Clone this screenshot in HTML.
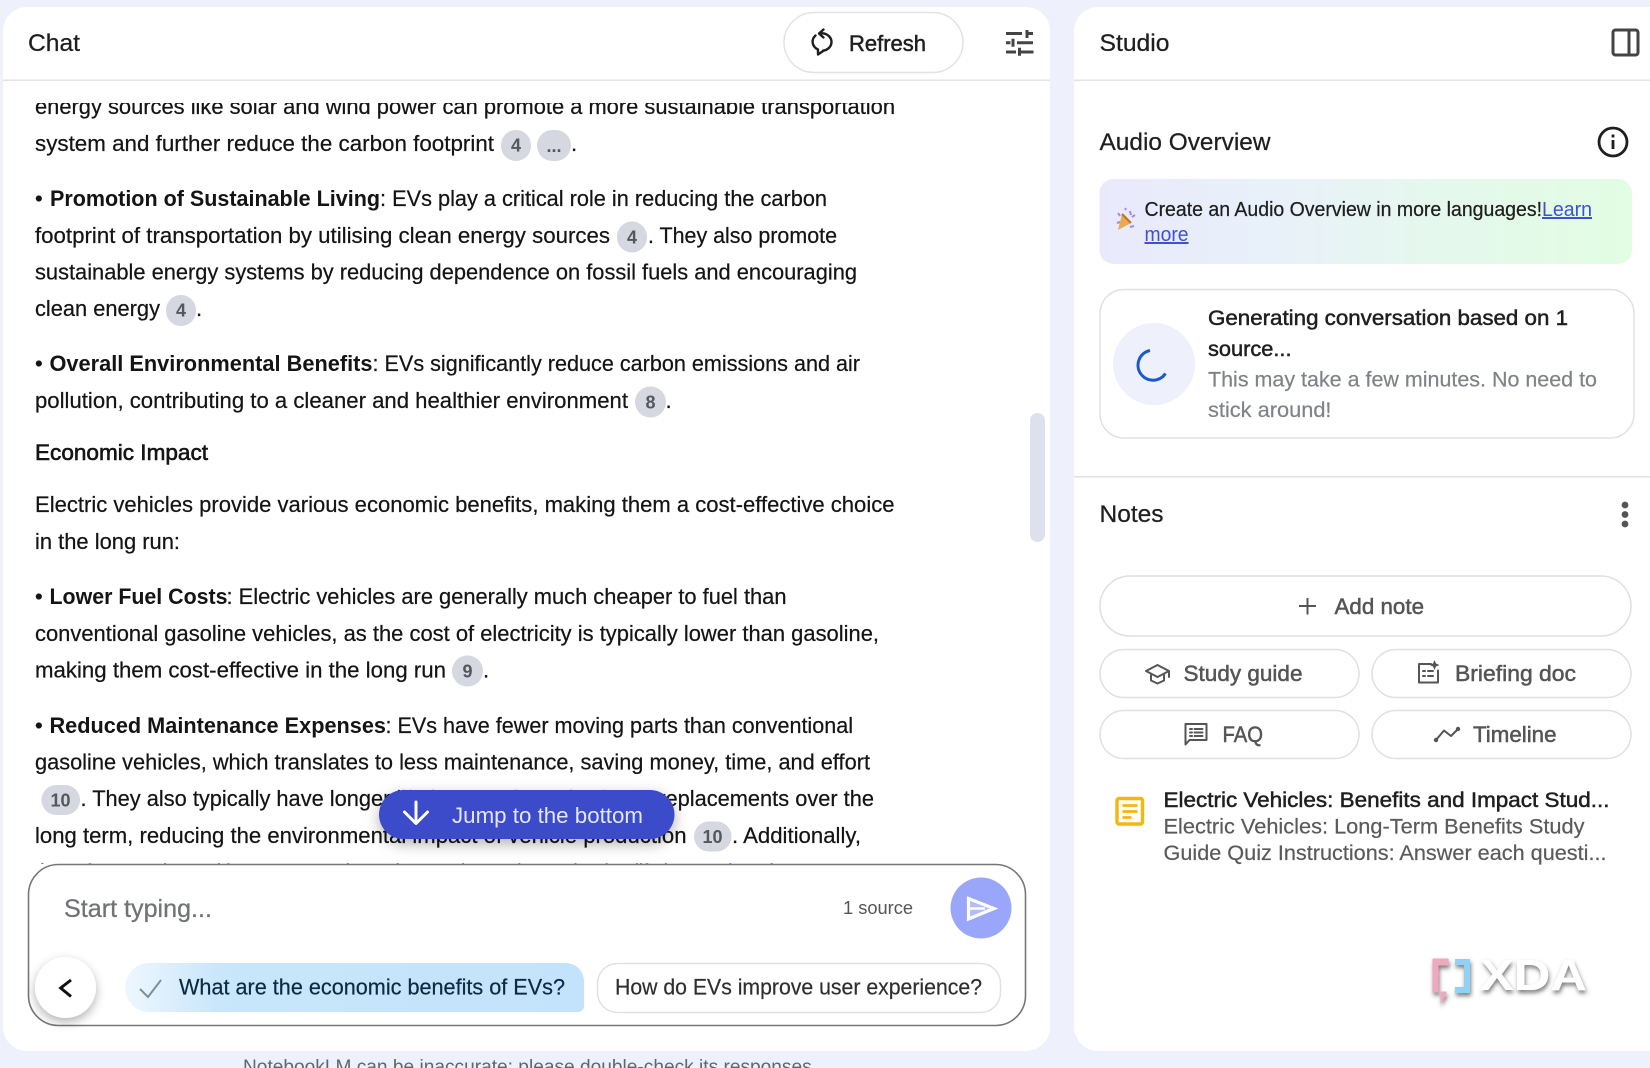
<!DOCTYPE html>
<html><head><meta charset="utf-8"><title>NotebookLM Chat</title>
<style>
html,body{margin:0;padding:0;background:#eef0fc;width:1650px;height:1068px;overflow:hidden}
svg{display:block}
text{font-family:"Liberation Sans",sans-serif;fill:#1f1f1f;font-size:22px}
g.t text{fill:#141414;stroke:#141414;stroke-width:.22px}
g.t text.b{stroke:none}
g.t text.c{fill:#55565e;stroke:none}
g.t text.m{stroke-width:.6px}
.b{font-weight:bold}
.m{stroke:#1f1f1f;stroke-width:.5px}
.l{stroke:#1f1f1f;stroke-width:.25px}
.c{font-size:18px;fill:#55565e;font-weight:bold;text-anchor:middle}
.gm{fill:#555;stroke:#555;stroke-width:.5px}
.gs{fill:#5a5a5a;stroke:#5a5a5a;stroke-width:.2px}
.chip{fill:#d5d7e1}
.ln{fill:none;stroke:#555;stroke-width:2;stroke-linecap:round;stroke-linejoin:round}
</style></head><body>
<svg width="1650" height="1068" viewBox="0 0 1650 1068" xmlns="http://www.w3.org/2000/svg">
<defs>
<clipPath id="cc"><rect x="3" y="103" width="1047" height="761"/></clipPath>
<linearGradient id="bn" x1="0" y1="0" x2="1" y2="0"><stop offset="0" stop-color="#e9e9fb"/><stop offset=".35" stop-color="#e8f1f9"/><stop offset=".65" stop-color="#e5f8ec"/><stop offset="1" stop-color="#e2fde3"/></linearGradient>
<linearGradient id="ch" x1="0" y1="0" x2="1" y2="0"><stop offset="0" stop-color="#eef7fe"/><stop offset=".2" stop-color="#c9e6fb"/><stop offset="1" stop-color="#c2e3fb"/></linearGradient>
<filter id="sh" x="-30%" y="-30%" width="160%" height="170%"><feDropShadow dx="0" dy="4" stdDeviation="5" flood-color="#000" flood-opacity=".3"/></filter>
<filter id="sh2" x="-20%" y="-50%" width="140%" height="220%"><feDropShadow dx="0" dy="5" stdDeviation="7" flood-color="#000" flood-opacity=".3"/></filter>
<filter id="lg" x="-20%" y="-30%" width="140%" height="170%"><feDropShadow dx="1" dy="3" stdDeviation="2" flood-color="#444" flood-opacity=".7"/></filter>
</defs>

<!-- panels -->
<rect x="3" y="7" width="1047" height="1044" rx="24" fill="#fff"/>
<rect x="1074" y="7" width="600" height="1044" rx="24" fill="#fff"/>

<!-- chat header -->
<text x="28" y="51" class="l" style="font-size:24px" textLength="52" lengthAdjust="spacingAndGlyphs">Chat</text>
<rect x="784" y="12.5" width="179" height="60" rx="30" fill="#fff" stroke="#e2e3e6" stroke-width="1.5"/>
<g fill="none" stroke="#1f1f1f" stroke-width="2.4" stroke-linejoin="round" stroke-linecap="round">
<path d="M820 33.3 H823 A10 8.8 0 0 1 823 50.7"/>
<path d="M823.5 29.5 L819 33.5 L823.5 37.5"/>
<path d="M815.5 35.5 A10 8.8 0 0 0 818 49.5 V54.5 L823.5 50.8"/>
</g>
<text x="849" y="51" class="m" textLength="77" lengthAdjust="spacingAndGlyphs">Refresh</text>
<g stroke="#444" stroke-width="3" fill="none">
<path d="M1006 33.5h16M1027 30v8M1027 33.5h6"/>
<path d="M1006 42.8h4.5M1013 38.8v8M1017 42.8h16"/>
<path d="M1006 52h10M1019.5 47.8v8M1019.5 52h14"/>
</g>
<rect x="3" y="79.5" width="1047" height="1.6" fill="#e3e3e6"/>

<!-- chat body -->
<g clip-path="url(#cc)" class="t">
<text x="35" y="114" textLength="860" lengthAdjust="spacingAndGlyphs">energy sources like solar and wind power can promote a more sustainable transportation</text>
<text x="35" y="151" textLength="459" lengthAdjust="spacingAndGlyphs">system and further reduce the carbon footprint</text>
<rect class="chip" x="501" y="130" width="30" height="31" rx="15"/><text class="c" x="516" y="151.5">4</text>
<rect class="chip" x="537" y="130" width="34" height="31" rx="15.5"/><text class="c" x="554" y="152">...</text>
<text x="571" y="151">.</text>

<text x="35" y="206">•</text>
<text x="50" y="206" class="b" textLength="330" lengthAdjust="spacingAndGlyphs">Promotion of Sustainable Living</text>
<text x="380" y="206" textLength="447" lengthAdjust="spacingAndGlyphs">: EVs play a critical role in reducing the carbon</text>
<text x="35" y="243" textLength="575" lengthAdjust="spacingAndGlyphs">footprint of transportation by utilising clean energy sources</text>
<rect class="chip" x="617" y="221.5" width="30" height="31" rx="15"/><text class="c" x="632" y="243.5">4</text>
<text x="648" y="243" textLength="189" lengthAdjust="spacingAndGlyphs">. They also promote</text>
<text x="35" y="279.5" textLength="822" lengthAdjust="spacingAndGlyphs">sustainable energy systems by reducing dependence on fossil fuels and encouraging</text>
<text x="35" y="316" textLength="125" lengthAdjust="spacingAndGlyphs">clean energy</text>
<rect class="chip" x="166" y="295" width="30" height="31" rx="15"/><text class="c" x="181" y="316.5">4</text>
<text x="196" y="316">.</text>

<text x="35" y="371">•</text>
<text x="49.5" y="371" class="b" textLength="323" lengthAdjust="spacingAndGlyphs">Overall Environmental Benefits</text>
<text x="372.5" y="371" textLength="487.5" lengthAdjust="spacingAndGlyphs">: EVs significantly reduce carbon emissions and air</text>
<text x="35" y="408" textLength="593" lengthAdjust="spacingAndGlyphs">pollution, contributing to a cleaner and healthier environment</text>
<rect class="chip" x="635" y="386.5" width="31" height="31" rx="15.5"/><text class="c" x="650.5" y="408.5">8</text>
<text x="665.5" y="408">.</text>

<text x="35" y="460" class="m" textLength="173" lengthAdjust="spacingAndGlyphs">Economic Impact</text>
<text x="35" y="512" textLength="859.5" lengthAdjust="spacingAndGlyphs">Electric vehicles provide various economic benefits, making them a cost-effective choice</text>
<text x="35" y="549" textLength="145" lengthAdjust="spacingAndGlyphs">in the long run:</text>

<text x="35" y="604">•</text>
<text x="49.5" y="604" class="b" textLength="178" lengthAdjust="spacingAndGlyphs">Lower Fuel Costs</text>
<text x="226.5" y="604" textLength="560" lengthAdjust="spacingAndGlyphs">: Electric vehicles are generally much cheaper to fuel than</text>
<text x="35" y="641" textLength="844" lengthAdjust="spacingAndGlyphs">conventional gasoline vehicles, as the cost of electricity is typically lower than gasoline,</text>
<text x="35" y="677.5" textLength="411" lengthAdjust="spacingAndGlyphs">making them cost-effective in the long run</text>
<rect class="chip" x="452" y="655.5" width="31" height="31" rx="15.5"/><text class="c" x="467.5" y="677.5">9</text>
<text x="483" y="677.5">.</text>

<text x="35" y="733">•</text>
<text x="49.5" y="733" class="b" textLength="336.5" lengthAdjust="spacingAndGlyphs">Reduced Maintenance Expenses</text>
<text x="385.5" y="733" textLength="467.5" lengthAdjust="spacingAndGlyphs">: EVs have fewer moving parts than conventional</text>
<text x="35" y="769.5" textLength="835" lengthAdjust="spacingAndGlyphs">gasoline vehicles, which translates to less maintenance, saving money, time, and effort</text>
<rect class="chip" x="41.5" y="785" width="38.5" height="30" rx="15"/><text class="c" x="60.5" y="806.5">10</text>
<text x="80.5" y="806" textLength="793.5" lengthAdjust="spacingAndGlyphs">. They also typically have longer lifetimes and require fewer replacements over the</text>
<text x="35" y="843" textLength="651.5" lengthAdjust="spacingAndGlyphs">long term, reducing the environmental impact of vehicle production</text>
<rect class="chip" x="694" y="821.5" width="37.5" height="30" rx="15"/><text class="c" x="712.5" y="843">10</text>
<text x="732" y="843" textLength="129" lengthAdjust="spacingAndGlyphs">. Additionally,</text>
<text x="35" y="879.5" textLength="820" lengthAdjust="spacingAndGlyphs">these factors, along with government incentives and tax rebates, lead to lifetime savings for owners</text>
</g>

<!-- scrollbar -->
<rect x="1030" y="413" width="15" height="129" rx="7.5" fill="#dde1ec"/>

<!-- jump button -->
<rect x="379" y="790" width="295.5" height="49" rx="24.5" fill="#3b4bc9" filter="url(#sh2)"/>
<path d="M416 802v21M404.5 812l11.5 11.5l11.5-11.5" fill="none" stroke="#fff" stroke-width="3" stroke-linecap="round" stroke-linejoin="round"/>
<text x="452" y="823" style="fill:#e3e7fd" textLength="191" lengthAdjust="spacingAndGlyphs">Jump to the bottom</text>

<!-- input -->
<rect x="28.5" y="864.5" width="997" height="161" rx="30" fill="#fff" stroke="#777" stroke-width="1.6"/>
<text x="64" y="917" style="font-size:25px;fill:#707275;stroke:#707275;stroke-width:.25px" textLength="148" lengthAdjust="spacingAndGlyphs">Start typing...</text>
<text x="843" y="914" style="font-size:18px;fill:#555" textLength="70" lengthAdjust="spacingAndGlyphs">1 source</text>
<circle cx="981" cy="908" r="30.5" fill="#9aa6f9"/>
<path d="M968.5 898.5 L994 908.5 L968.5 919 Z" fill="#b3bbfb" stroke="#fff" stroke-width="3.2" stroke-linejoin="miter"/>
<path d="M968.5 908.5 H985" stroke="#fff" stroke-width="2.6"/>

<path d="M148 963 H566 a18 18 0 0 1 18 18 V1006 a6 6 0 0 1 -6 6 H148 a24.5 24.5 0 0 1 -23 -24.5 a24.5 24.5 0 0 1 23 -24.5Z" fill="url(#ch)"/>
<path d="M140 989 L148 997 L161 980" fill="none" stroke="#7f8e9c" stroke-width="2"/>
<text x="179" y="994.5" style="fill:#0c2b42;stroke:#0c2b42;stroke-width:.22px" textLength="386" lengthAdjust="spacingAndGlyphs">What are the economic benefits of EVs?</text>
<rect x="597.5" y="963.5" width="403" height="49" rx="20" fill="#fff" stroke="#e0e1e4" stroke-width="1.5"/>
<text x="615" y="994.5" style="fill:#2f2f2f;stroke:#2f2f2f;stroke-width:.2px" textLength="367" lengthAdjust="spacingAndGlyphs">How do EVs improve user experience?</text>
<circle cx="65.5" cy="987.5" r="30.5" fill="#fff" filter="url(#sh)"/>
<path d="M71 980 L60.7 988 L71 996.5" fill="none" stroke="#111" stroke-width="3"/>

<text x="243" y="1073" style="font-size:19px;fill:#63656d" textLength="574" lengthAdjust="spacingAndGlyphs">NotebookLM can be inaccurate; please double-check its responses.</text>

<!-- studio header -->
<text x="1099.5" y="51" class="l" style="font-size:24px" textLength="70" lengthAdjust="spacingAndGlyphs">Studio</text>
<rect x="1613" y="30" width="25" height="25" rx="2.5" fill="none" stroke="#444" stroke-width="3"/>
<rect x="1627.5" y="30" width="3" height="25" fill="#444"/>
<rect x="1074" y="79.5" width="576" height="1.6" fill="#e3e3e6"/>

<!-- audio overview -->
<text x="1099.5" y="150" class="l" style="font-size:24px" textLength="171" lengthAdjust="spacingAndGlyphs">Audio Overview</text>
<circle cx="1613" cy="142" r="14" fill="none" stroke="#1f1f1f" stroke-width="2.8"/>
<rect x="1611.6" y="140" width="2.8" height="9" fill="#1f1f1f"/><rect x="1611.6" y="134.5" width="2.8" height="3" fill="#1f1f1f"/>

<rect x="1099.5" y="179" width="532.5" height="85" rx="14" fill="url(#bn)"/>
<path d="M1118 230 L1122 214 L1131 223 Z" fill="#e9ab4e"/>
<path d="M1122 214 L1131 223" stroke="#b9742a" stroke-width="2"/>
<path d="M1118 213l2 3M1130 211l1 4M1135 215l-3 2M1117 223l3-1M1130 227l4-1M1125 210l1-2" stroke="#a58be0" stroke-width="2" fill="none"/>
<text x="1144.5" y="216" class="l" style="font-size:20px" textLength="397.5" lengthAdjust="spacingAndGlyphs">Create an Audio Overview in more languages!</text>
<text x="1542" y="216" style="font-size:20px;fill:#3f50d4;text-decoration:underline" textLength="50" lengthAdjust="spacingAndGlyphs">Learn</text>
<text x="1144.5" y="241" style="font-size:20px;fill:#3f50d4;text-decoration:underline" textLength="44" lengthAdjust="spacingAndGlyphs">more</text>

<rect x="1100" y="289.5" width="534" height="148.5" rx="24" fill="#fff" stroke="#dfe0e3" stroke-width="1.5"/>
<circle cx="1154" cy="364" r="41" fill="#eef1fb"/>
<path d="M1150 350.5 A15 15 0 1 0 1165.5 373.5" fill="none" stroke="#1b57cf" stroke-width="3"/>
<text x="1208" y="325" class="m" style="font-size:21.5px" textLength="360" lengthAdjust="spacingAndGlyphs">Generating conversation based on 1</text>
<text x="1208" y="356" class="m" style="font-size:21.5px" textLength="83.5" lengthAdjust="spacingAndGlyphs">source...</text>
<text x="1208" y="386.5" style="font-size:21.5px;fill:#7f8387;stroke:#7f8387;stroke-width:.2px" textLength="389" lengthAdjust="spacingAndGlyphs">This may take a few minutes. No need to</text>
<text x="1208" y="417" style="font-size:21.5px;fill:#7f8387;stroke:#7f8387;stroke-width:.2px" textLength="123.5" lengthAdjust="spacingAndGlyphs">stick around!</text>

<rect x="1074" y="476" width="576" height="1.6" fill="#e3e3e6"/>

<!-- notes -->
<text x="1099.5" y="522" class="l" style="font-size:24px" textLength="64" lengthAdjust="spacingAndGlyphs">Notes</text>
<circle cx="1625" cy="505" r="3.4" fill="#555"/><circle cx="1625" cy="514.5" r="3.4" fill="#555"/><circle cx="1625" cy="524" r="3.4" fill="#555"/>

<rect x="1100" y="576" width="531" height="60" rx="30" fill="#fff" stroke="#dfe0e3" stroke-width="1.5"/>
<path d="M1307.5 598v16.5M1299 606h17" stroke="#555" stroke-width="2" fill="none"/>
<text x="1334.5" y="614" class="gm" textLength="89.5" lengthAdjust="spacingAndGlyphs">Add note</text>

<rect x="1100" y="649.5" width="259" height="48" rx="24" fill="#fff" stroke="#dfe0e3" stroke-width="1.5"/>
<rect x="1372" y="649.5" width="259" height="48" rx="24" fill="#fff" stroke="#dfe0e3" stroke-width="1.5"/>
<rect x="1100" y="710.5" width="259" height="48" rx="24" fill="#fff" stroke="#dfe0e3" stroke-width="1.5"/>
<rect x="1372" y="710.5" width="259" height="48" rx="24" fill="#fff" stroke="#dfe0e3" stroke-width="1.5"/>

<path class="ln" d="M1157.5 665 L1169 671 L1157.5 677 L1146 671 Z M1151 675 v5.5 l6.5 3 l6.5 -3 v-5.5 M1169 671 v6"/>
<text x="1183.5" y="681" class="gm" textLength="119" lengthAdjust="spacingAndGlyphs">Study guide</text>
<path class="ln" d="M1431 664 h-12 v18.5 h19 v-12 M1423 671h2M1428 671h5M1423 676h2M1428 676h5"/>
<path d="M1434.5 660 l1.5 3.5 l3.5 1.5 l-3.5 1.5 l-1.5 3.5 l-1.5 -3.5 l-3.5 -1.5 l3.5 -1.5Z" fill="#555"/>
<text x="1455" y="681" class="gm" textLength="121" lengthAdjust="spacingAndGlyphs">Briefing doc</text>
<path class="ln" d="M1185.5 724 h21 v16 h-17 l-4 4.5 Z M1190 729h2M1194.5 729h8M1190 732.5h2M1194.5 732.5h8M1190 736h2M1194.5 736h8" stroke-width="1.8"/>
<text x="1222.5" y="742" class="gm" textLength="40.5" lengthAdjust="spacingAndGlyphs">FAQ</text>
<path class="ln" d="M1436 740 L1444 730.5 L1451 736 L1458 729" stroke-width="2.8"/>
<circle cx="1436" cy="740" r="2.2" fill="#555"/><circle cx="1458" cy="729" r="2.2" fill="#555"/>
<text x="1473" y="742" class="gm" textLength="83.5" lengthAdjust="spacingAndGlyphs">Timeline</text>

<rect x="1117" y="798.5" width="25.5" height="25.5" rx="2" fill="#fff" stroke="#f3b70e" stroke-width="3.4"/>
<path d="M1122.5 805.5h15M1122.5 811.5h15M1122.5 817.5h9" stroke="#f3b70e" stroke-width="2.8"/>
<text x="1163.5" y="807" class="m" style="font-size:21.5px" textLength="446" lengthAdjust="spacingAndGlyphs">Electric Vehicles: Benefits and Impact Stud...</text>
<text x="1163.5" y="833.5" class="gs" style="font-size:21.5px" textLength="421" lengthAdjust="spacingAndGlyphs">Electric Vehicles: Long-Term Benefits Study</text>
<text x="1163.5" y="860" class="gs" style="font-size:21.5px" textLength="443" lengthAdjust="spacingAndGlyphs">Guide Quiz Instructions: Answer each questi...</text>

<!-- XDA watermark -->
<g filter="url(#lg)">
<path d="M1448 959 h-15 v33 h8 v10 l5 -8 v-2 h-8 v-27 h10 Z" fill="#efa8bd" stroke="#efa8bd" stroke-width="1"/>
<path d="M1455 959 h15 v34 h-15 v-6 h9 v-22 h-9 Z" fill="#8fd2f5"/>
<text x="1480" y="990" class="b" style="font-size:44px;fill:#fff" textLength="107" lengthAdjust="spacingAndGlyphs">XDA</text>
</g>
</svg>
</body></html>
